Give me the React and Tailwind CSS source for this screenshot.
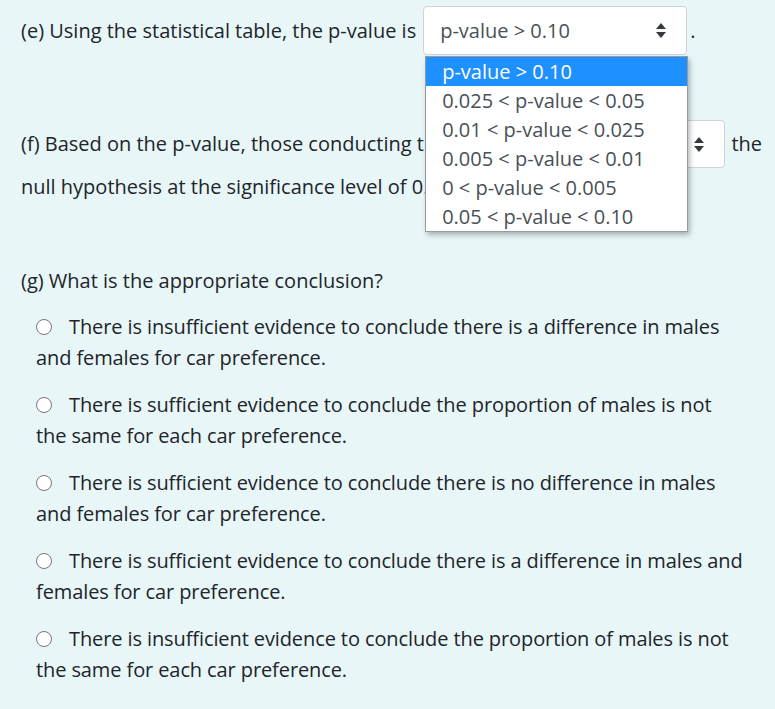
const options = [
  'p-value > 0.10',
  '0.025 < p-value < 0.05',
  '0.01 < p-value < 0.025',
  '0.005 < p-value < 0.01',
  '0 < p-value < 0.005',
  '0.05 < p-value < 0.10',
]

const answers = [
  'There is insufficient evidence to conclude there is a difference in males and females for car preference.',
  'There is sufficient evidence to conclude the proportion of males is not the same for each car preference.',
  'There is sufficient evidence to conclude there is no difference in males and females for car preference.',
  'There is sufficient evidence to conclude there is a difference in males and females for car preference.',
  'There is insufficient evidence to conclude the proportion of males is not the same for each car preference.',
]

function Arrows() {
  return (
    <svg width="10" height="15" viewBox="0 0 10 15" className="shrink-0">
      <path d="M5 0L10 6H0z" fill="#343a40" />
      <path d="M5 15L0 9H10z" fill="#343a40" />
    </svg>
  )
}

function SelectBox({ value, className = '', children }) {
  return (
    <div
      className={`relative flex items-center justify-between rounded-[4px] border border-[#ced4da] bg-white pl-[16px] pr-[20px] text-[#495057] ${className}`}
    >
      <span className="truncate">{value}</span>
      <Arrows />
      {children}
    </div>
  )
}

export default function App() {
  return (
    <div className="min-h-screen bg-[#e8f6f8] px-[21px] pt-[6px] font-['Open_Sans',sans-serif] text-[20px] text-[#212529]">
      {/* (e) */}
      <div className="relative z-20 flex h-[49px] items-center">
        <span className="whitespace-nowrap">(e) Using the statistical table, the p-value is</span>
        <SelectBox value="p-value > 0.10" className="ml-[7px] h-[49px] w-[264px] shrink-0">
          <div className="absolute left-[1px] top-[49px] w-[263px] border border-[#9a9a9a] bg-white shadow-[2px_3px_5px_rgba(0,0,0,0.28)]">
            {options.map((o, i) => (
              <div
                key={o}
                className={`h-[29px] whitespace-nowrap pl-[16px] leading-[29px] ${
                  i === 0 ? 'bg-[#1e90ff] text-white' : 'text-[#495057]'
                }`}
              >
                {o}
              </div>
            ))}
          </div>
        </SelectBox>
        <span className="ml-[3px]">.</span>
      </div>

      {/* (f) */}
      <div className="mt-[65px] flex h-[48px] w-[741px] items-center">
        <span className="whitespace-nowrap">(f) Based on the p-value, those conducting the test</span>
        <SelectBox value="reject" className="ml-[6px] h-[48px] min-w-0 flex-1" />
        <span className="ml-[6px]">the</span>
      </div>
      <p className="mt-[3px] leading-[31px]">null hypothesis at the significance level of 0.05.</p>

      {/* (g) */}
      <p className="mt-[63px] leading-[31px]">(g) What is the appropriate conclusion?</p>
      <div className="ml-[15px] mt-[15px] w-[710px] tracking-[-0.1px]">
        {answers.map((a) => (
          <label key={a} className="mb-[16px] block leading-[31px]">
            <span className="mr-[17px] inline-block h-[16px] w-[16px] translate-y-[1px] rounded-full border-[1.5px] border-[#767676] bg-white" />
            {a}
          </label>
        ))}
      </div>
    </div>
  )
}
